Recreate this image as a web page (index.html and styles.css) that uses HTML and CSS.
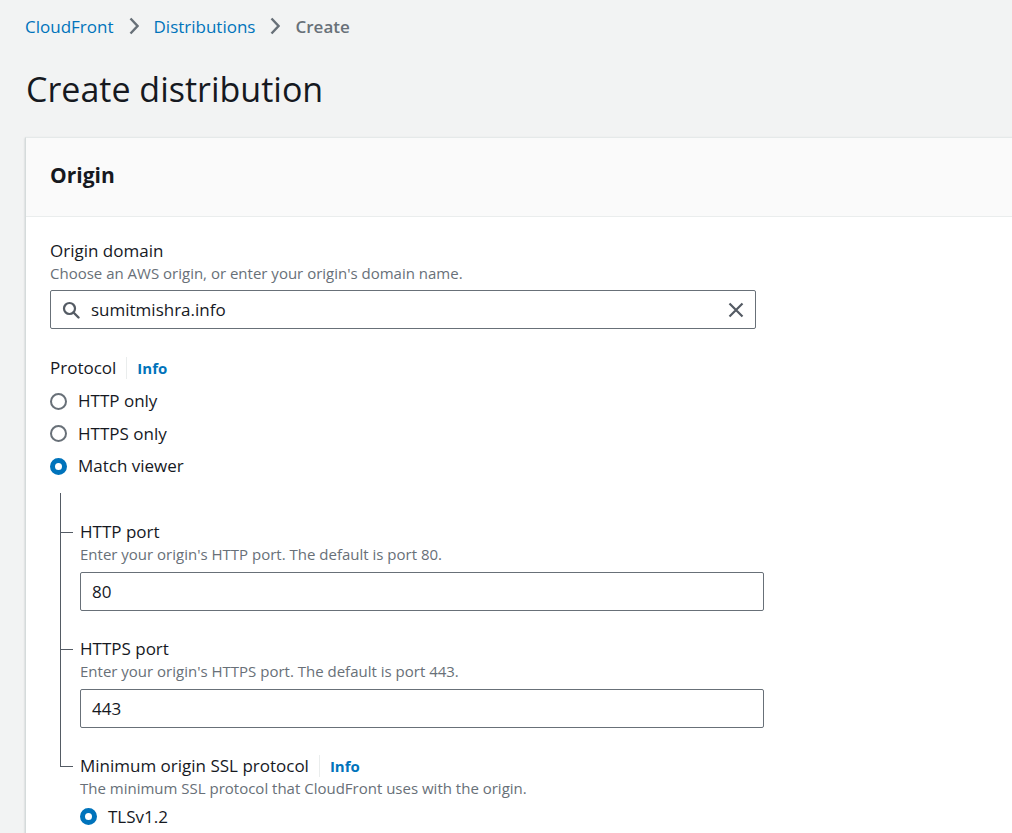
FILE: index.html
```html
<!DOCTYPE html>
<html lang="en">
<head>
<meta charset="utf-8">
<title>Create distribution</title>
<link rel="stylesheet" href="styles.css">
</head>
<body>
<div class="page">
  <nav class="breadcrumbs">
    <a class="crumb">CloudFront</a>
    <svg class="chev" viewBox="0 0 10 18" width="10" height="18"><path d="M1.5 1.5l7 7.5-7 7.5" fill="none" stroke="#687078" stroke-width="2.4"/></svg>
    <a class="crumb">Distributions</a>
    <svg class="chev" viewBox="0 0 10 18" width="10" height="18"><path d="M1.5 1.5l7 7.5-7 7.5" fill="none" stroke="#687078" stroke-width="2.4"/></svg>
    <span class="crumb-current">Create</span>
  </nav>
  <h1 class="title">Create distribution</h1>

  <section class="card">
    <header class="card-header"><h2>Origin</h2></header>
    <div class="card-body">
      <div class="field">
        <div class="label">Origin domain</div>
        <div class="desc">Choose an AWS origin, or enter your origin's domain name.</div>
        <div class="input search">
          <svg class="search-icon" viewBox="0 0 18 18" width="18" height="18"><circle cx="7.5" cy="7.5" r="5.5" fill="none" stroke="#545b64" stroke-width="2.2"/><path d="M11.5 11.5l5 5" stroke="#545b64" stroke-width="2.4" stroke-linecap="round"/></svg>
          <span class="value">sumitmishra.info</span>
          <svg class="clear-icon" viewBox="0 0 16 16" width="16" height="16"><path d="M1.5 1.5l13 13M14.5 1.5l-13 13" stroke="#545b64" stroke-width="2.2"/></svg>
        </div>
      </div>

      <div class="field proto">
        <div class="label">Protocol <span class="sep"></span><a class="info">Info</a></div>
        <div class="radios">
          <div class="radio"><span class="dot"></span>HTTP only</div>
          <div class="radio"><span class="dot"></span>HTTPS only</div>
          <div class="radio"><span class="dot on"></span>Match viewer</div>
        </div>
      </div>

      <div class="tree">
        <div class="branch">
          <div class="label">HTTP port</div>
          <div class="desc">Enter your origin's HTTP port. The default is port 80.</div>
          <div class="input"><span class="value">80</span></div>
        </div>
        <div class="branch">
          <div class="label">HTTPS port</div>
          <div class="desc">Enter your origin's HTTPS port. The default is port 443.</div>
          <div class="input"><span class="value">443</span></div>
        </div>
        <div class="branch last">
          <div class="label">Minimum origin SSL protocol <span class="sep"></span><a class="info">Info</a></div>
          <div class="desc">The minimum SSL protocol that CloudFront uses with the origin.</div>
          <div class="radio tls"><span class="dot on"></span>TLSv1.2</div>
        </div>
      </div>
    </div>
  </section>
</div>
</body>
</html>
```

FILE: styles.css
```css
html, body {
  margin: 0;
  padding: 0;
  background: #f2f3f3;
  overflow: hidden;
  height: 833px;
}
body {
  font-family: "Open Sans", "Noto Sans", sans-serif;
  color: #16191f;
}
.page {
  padding-left: 25px;
}
.breadcrumbs {
  display: flex;
  align-items: center;
  height: 28px;
  padding-top: 12px;
  font-size: 17px;
}
.crumb {
  color: #0073bb;
}
.chev {
  margin: 0 15px 0 15px;
}
.crumb-current {
  color: #687078;
  font-weight: 600;
}
.title {
  margin: 27px 0 0 1px;
  font-size: 34px;
  font-weight: 400;
  line-height: 44px;
  color: #16191f;
}
.card {
  margin-top: 26px;
  width: 1100px;
  background: #fff;
  border-left: 1px solid #d5dbdb;
  border-top: 1px solid #e5e9e9;
  box-shadow: 0 1px 2px rgba(0,28,36,0.2);
}
.card-header {
  background: #fafafa;
  border-bottom: 1px solid #eaeded;
  height: 79px;
  display: flex;
  align-items: center;
  padding-left: 24px;
  padding-bottom: 5px;
  box-sizing: border-box;
}
.card-header h2 {
  margin: 0;
  font-size: 21px;
  font-weight: 700;
  line-height: 24px;
}
.card-body {
  padding: 23px 24px 40px 24px;
}
.label {
  font-size: 17px;
  line-height: 22px;
  display: flex;
  align-items: center;
}
.desc {
  font-size: 15px;
  line-height: 22px;
  color: #687078;
}
.sep {
  display: inline-block;
  width: 1px;
  height: 22px;
  background: #eaeded;
  margin: 0 10px 0 10px;
}
.info {
  color: #0073bb;
  font-weight: 700;
  font-size: 15px;
}
.input {
  margin-top: 6px;
  height: 39px;
  box-sizing: border-box;
  border: 1px solid #687078;
  border-radius: 2px;
  display: flex;
  align-items: center;
  padding: 0 11px;
  font-size: 17px;
  width: 706px;
}
.search-icon {
  margin: 0 11px 0 0;
}
.clear-icon {
  margin-left: auto;
}
.proto {
  margin-top: 28px;
}
.radios {
  margin-top: 6px;
}
.radio {
  display: flex;
  align-items: center;
  font-size: 17px;
  height: 32.5px;
  line-height: 22px;
}
.dot {
  width: 13px;
  height: 13px;
  border: 2px solid #687078;
  border-radius: 50%;
  margin-right: 11px;
  box-sizing: content-box;
}
.dot.on {
  width: 7px;
  height: 7px;
  border: 5px solid #0073bb;
}
.tree {
  margin-left: 10px;
  margin-top: 10px;
  padding-top: 28px;
  border-left: 1px solid #545b64;
  position: relative;
}
.branch {
  position: relative;
  padding-left: 19px;
  margin-bottom: 27px;
}
.branch::before {
  content: "";
  position: absolute;
  left: 0;
  top: 11px;
  width: 12px;
  border-top: 1px solid #545b64;
}
.branch .input {
  width: 684px;
  margin-top: 7px;
}
.branch.last {
  margin-bottom: 0;
}
.branch.last::after {
  content: "";
  position: absolute;
  left: -1px;
  top: 12px;
  bottom: -40px;
  width: 2px;
  background: #fff;
}
.radio.tls {
  margin-top: 2px;
}
```
